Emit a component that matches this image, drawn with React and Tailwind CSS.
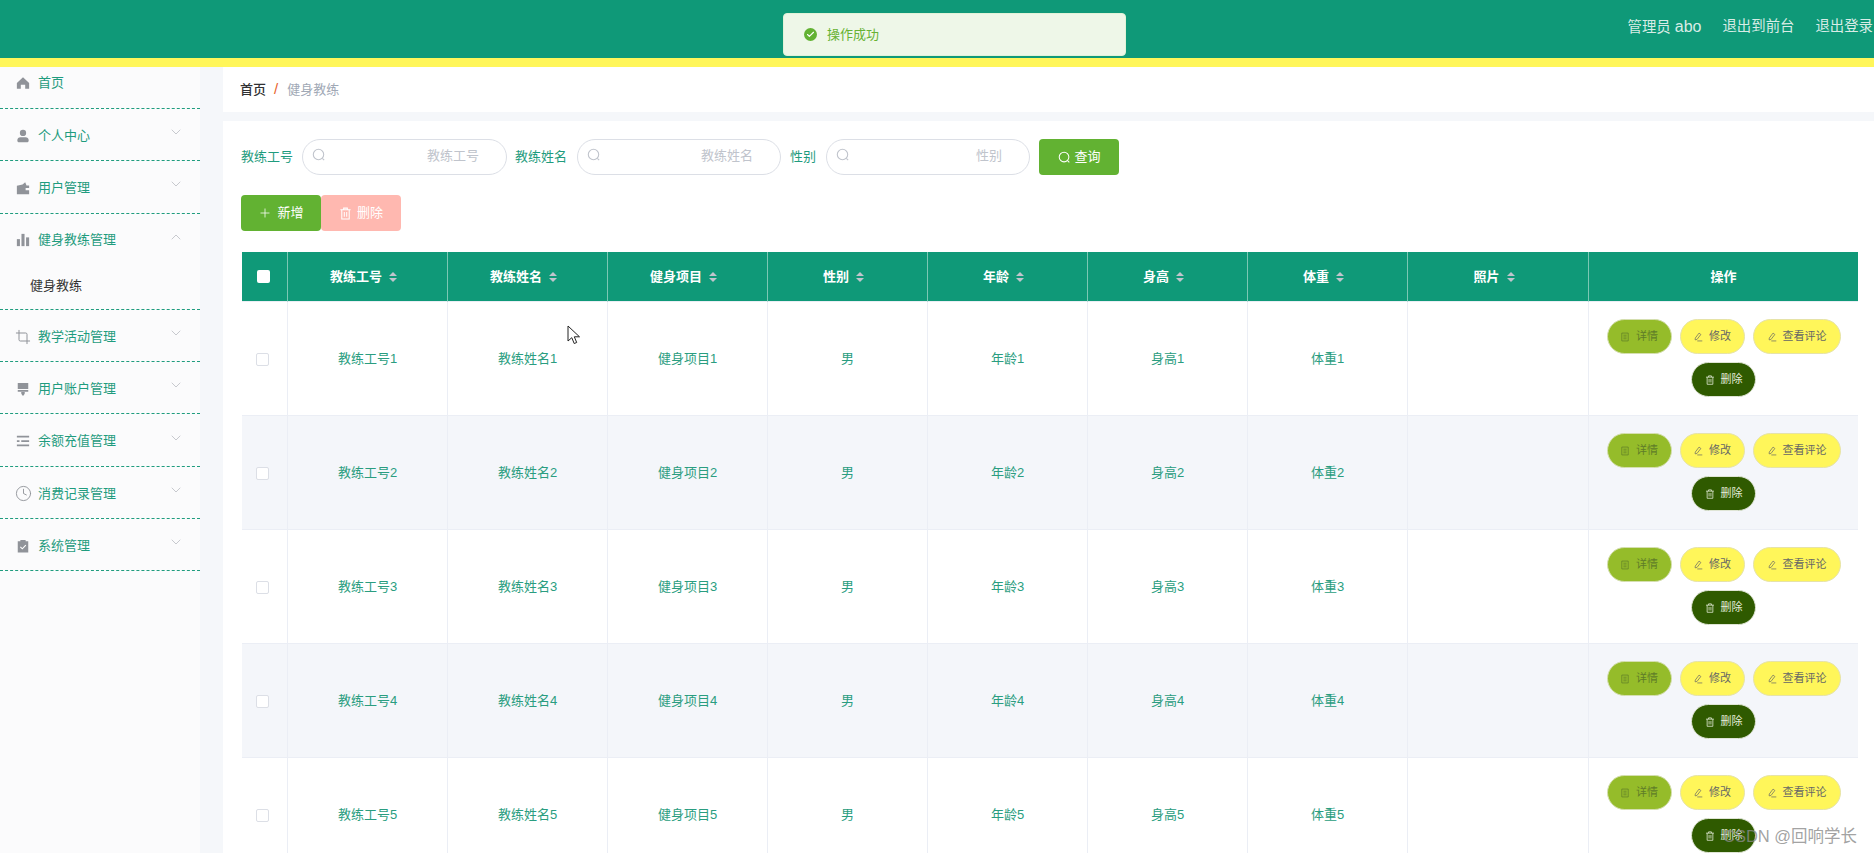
import React from 'react';
import { Check, ChevronDown, ChevronUp, Clock, Crop, Plus } from 'lucide-react';

// small solid icons used by the sidebar
const HomeIcon = () => (
  <svg viewBox="0 0 16 16" className="w-[14px] h-[14px] fill-[#909399]">
    <path d="M8 1.500 15 8v6.500h-4.500V10h-5v4.500H1V8z" />
  </svg>
);
const UserIcon = () => (
  <svg viewBox="0 0 16 16" className="w-[14px] h-[14px] fill-[#909399]">
    <circle cx="8" cy="4.500" r="3.600" />
    <path d="M1.500 13c0-2.400 1.600-3.600 3.500-3.600h6c1.900 0 3.500 1.200 3.500 3.600 0 1.300-.7 2-2 2H3.500c-1.300 0-2-.7-2-2z" />
  </svg>
);
const WalletIcon = () => (
  <svg viewBox="0 0 16 16" className="w-[14px] h-[14px] fill-[#909399]">
    <path d="M1 5.500 7.500 4l3-2.500L12 5h3v3h-4v2.500h4V15H1z" />
  </svg>
);
const BarsIcon = () => (
  <svg viewBox="0 0 16 16" className="w-[14px] h-[14px] fill-[#909399]">
    <rect x="1" y="7" width="3.500" height="8" />
    <rect x="6.250" y="1" width="3.500" height="14" />
    <rect x="11.500" y="5" width="3.500" height="10" />
  </svg>
);
const BrushIcon = () => (
  <svg viewBox="0 0 16 16" className="w-[14px] h-[14px] fill-[#909399]">
    <path d="M2 1h12v7H2zM2 9h12v2H2zM6 11.500h4V13l-1.200 2.500H7.200L6 13z" />
  </svg>
);
const LinesIcon = () => (
  <svg viewBox="0 0 16 16" className="w-[14px] h-[14px] fill-[#909399]">
    <path d="M1 2h14v2H1zM6 7h9v2H6zM1 7h3v2H1zM1 12h14v2H1z" />
  </svg>
);
const ClipboardIcon = () => (
  <svg viewBox="0 0 16 16" className="w-[16px] h-[16px]">
    <path className="fill-[#909399]" d="M2 2.500h3V1h6v1.500h3V15.500H2z" />
    <path d="M5 9l2.200 2.200L11.200 7" fill="none" stroke="#fff" strokeWidth="1.300" />
  </svg>
);

const SearchIcon = ({ className }) => (
  <svg viewBox="0 0 14 14" fill="none" stroke="currentColor" strokeWidth="1.100" className={className}>
    <circle cx="6.500" cy="6.500" r="5.200" />
    <path d="M10.300 10.300 12.200 12.200" />
  </svg>
);
const TrashIcon = ({ className }) => (
  <svg viewBox="0 0 14 14" fill="none" stroke="currentColor" strokeWidth="1.100" className={className}>
    <path d="M1.500 3h11M5 3V1.200h4V3M3 3v10h8V3M5.700 5.500v5M8.300 5.500v5" />
  </svg>
);
const PencilIcon = ({ className }) => (
  <svg viewBox="0 0 14 14" fill="none" stroke="currentColor" strokeWidth="1" className={className}>
    <path d="M8.500 1.500 11 3.500 5.500 10.500 3 11l.2-2.500zM6 12.500h7" />
  </svg>
);
const DocIcon = ({ className }) => (
  <svg viewBox="0 0 14 14" fill="none" stroke="currentColor" strokeWidth="1" className={className}>
    <path d="M2.500 1.500h9v11h-9zM4.800 4.500h4.400M4.800 7h4.400M4.800 9.500h4.400" />
  </svg>
);

const SortCaret = () => (
  <span className="flex flex-col gap-[2px] ml-[7px]">
    <span className="w-0 h-0 border-x-[4px] border-x-transparent border-b-[4px] border-b-[#c0c4cc]" />
    <span className="w-0 h-0 border-x-[4px] border-x-transparent border-t-[4px] border-t-[#c0c4cc]" />
  </span>
);

const menu = [
  { label: '个人中心', icon: <UserIcon /> },
  { label: '用户管理', icon: <WalletIcon /> },
  { label: '健身教练管理', icon: <BarsIcon />, open: true },
  { label: '教学活动管理', icon: <Crop className="w-[16px] h-[16px] shrink-0 text-[#909399]" strokeWidth={1.500} /> },
  { label: '用户账户管理', icon: <BrushIcon /> },
  { label: '余额充值管理', icon: <LinesIcon /> },
  { label: '消费记录管理', icon: <Clock className="w-[17px] h-[17px] shrink-0 text-[#909399]" strokeWidth={1.300} /> },
  { label: '系统管理', icon: <ClipboardIcon /> },
];

const Sidebar = () => (
  <aside className="w-[200px] shrink-0 bg-[#fbfbfc] text-[13px] text-[#1f9c7e]">
    <div className="h-[42px] pb-[10px] flex items-center pl-[16px] gap-[8px] border-b border-dashed border-[#1f9c7e]">
      <HomeIcon />
      <span>首页</span>
    </div>
    {menu.map((item) => (
      <div key={item.label} className="border-b border-dashed border-[#1f9c7e]">
        <div className="h-[51.3px] pt-[2px] flex items-center pl-[16px] pr-[16px] gap-[8px]">
          <span className="w-[14px] flex justify-center">{item.icon}</span>
          <span className="flex-1">{item.label}</span>
          {item.open ? (
            <ChevronUp className="w-[16px] h-[16px] mb-[7px] text-[#b4b7bd]" strokeWidth={1.100} />
          ) : (
            <ChevronDown className="w-[16px] h-[16px] mb-[7px] text-[#b4b7bd]" strokeWidth={1.100} />
          )}
        </div>
        {item.open && <div className="h-[44px] pb-[2px] flex items-center pl-[30px] text-[#333]">健身教练</div>}
      </div>
    ))}
  </aside>
);

const SearchField = ({ label, width }) => (
  <>
    <span className="text-[13px] text-[#1f9c7e]">{label}</span>
    <div className={`${width} h-[36px] rounded-full border border-[#dcdfe6] bg-white flex items-center justify-between pl-[9px] pr-[27px] pb-[2px] text-[13px] text-[#c0c4cc]`}>
      <SearchIcon className="w-[14px] h-[14px] mb-[3px]" />
      <span>{label}</span>
    </div>
  </>
);

const columns = ['教练工号', '教练姓名', '健身项目', '性别', '年龄', '身高', '体重'];

const RowActions = () => (
  <div className="flex flex-wrap justify-center gap-2 pb-px text-[11px]">
    <button className="w-[65px] h-[35px] rounded-full bg-[#95bc2a] border border-[#d5dfb0] text-[#5f7d28] flex items-center justify-center gap-[6px]">
      <DocIcon className="w-[10px] h-[10px]" />详情
    </button>
    <button className="w-[65px] h-[35px] rounded-full bg-[#fff65a] border border-[#e6e3a8] text-[#666] flex items-center justify-center gap-[6px]">
      <PencilIcon className="w-[10px] h-[10px]" />修改
    </button>
    <button className="w-[88px] h-[35px] rounded-full bg-[#fff65a] border border-[#e6e3a8] text-[#666] flex items-center justify-center gap-[6px]">
      <PencilIcon className="w-[10px] h-[10px]" />查看评论
    </button>
    <button className="w-[65px] h-[35px] rounded-full bg-[#2f5a00] border border-[#dfe5d5] text-[#e4ecd8] flex items-center justify-center gap-[6px]">
      <TrashIcon className="w-[10px] h-[10px]" />删除
    </button>
  </div>
);

const App = () => {
  const rows = [1, 2, 3, 4, 5];

  return (
    <div className="relative w-[1874px] h-[853px] overflow-hidden bg-[#f5f7fa] font-['Liberation_Sans','Noto_Sans_CJK_SC',sans-serif]">
      {/* Top bar */}
      <header className="h-[58px] bg-[#0f9978] flex items-center justify-end gap-[21px] pb-[4px] pr-px text-[14.4px] text-[#d8ece6]">
        <span>管理员 <span className="text-[16px]">abo</span></span>
        <span>退出到前台</span>
        <span>退出登录</span>
      </header>
      <div className="h-[9px] bg-[#fff65a]" />

      <div className="flex h-[786px]">
        <Sidebar />

        <main className="flex-1 pl-[23px] overflow-hidden">
          <div className="h-[45px] bg-white pl-[17px] flex items-center text-[13px]">
            <span className="text-[#303133] font-medium">首页</span>
            <span className="ml-[8px] mr-[9px] text-[15px] text-[#e8622c]">/</span>
            <span className="text-[#a0a8b5]">健身教练</span>
          </div>

          <section className="mt-[9px] bg-white h-[740px] pl-[18px] pt-[18px]">
            <div className="flex items-center h-[36px]">
              <SearchField label="教练工号" width="w-[205px] ml-[9px] mr-[8px]" />
              <SearchField label="教练姓名" width="w-[204px] ml-[10px] mr-[9px]" />
              <SearchField label="性别" width="w-[204px] ml-[10px] mr-[9px]" />
              <button className="w-[80px] h-[36px] rounded bg-[#62b232] text-white text-[13px] flex items-center justify-center gap-[4px]">
                <SearchIcon className="w-[13px] h-[13px]" />查询
              </button>
            </div>

            <div className="flex mt-[20px]">
              <button className="w-[80px] h-[36px] rounded bg-[#62b232] text-white text-[13px] flex items-center justify-center gap-[5px]">
                <Plus className="w-[14px] h-[14px]" strokeWidth={1.300} />新增
              </button>
              <button className="w-[80px] h-[36px] rounded bg-[#ffb8b0] text-white text-[13px] flex items-center justify-center gap-[5px]">
                <TrashIcon className="w-[13px] h-[13px]" />删除
              </button>
            </div>

            <table className="mt-[21px] ml-px w-[1616px] table-fixed border-separate border-spacing-0 text-[13px]">
              <thead>
                <tr className="h-[50px] bg-[#0f9978] text-white">
                  <th className="w-[46px] border-r border-b border-r-[#7cc7b4] border-b-[#ebeef5]">
                    <span className="block w-[13px] h-[13px] ml-[15px] mb-px rounded-[2px] bg-white" />
                  </th>
                  {columns.map((col) => (
                    <th key={col} className="w-[160px] border-r border-b border-r-[#7cc7b4] border-b-[#ebeef5] font-bold">
                      <span className="flex items-center justify-center pr-[8px]">{col}<SortCaret /></span>
                    </th>
                  ))}
                  <th className="w-[181px] border-r border-b border-r-[#7cc7b4] border-b-[#ebeef5] font-bold">
                    <span className="flex items-center justify-center pr-[8px]">照片<SortCaret /></span>
                  </th>
                  <th className="border-b border-b-[#ebeef5] font-bold">操作</th>
                </tr>
              </thead>
              <tbody>
                {rows.map((n) => (
                  <tr key={n} className={`h-[114px] text-[#2a9d80] ${n % 2 === 0 ? 'bg-[#f4f6fa]' : 'bg-white'}`}>
                    <td className="border-r border-b border-[#ebeef5]">
                      <span className="block w-[13px] h-[13px] ml-[14px] mt-[2px] rounded-[2px] border border-[#dcdfe6] bg-white" />
                    </td>
                    <td className="text-center border-r border-b border-[#ebeef5]">教练工号{n}</td>
                    <td className="text-center border-r border-b border-[#ebeef5]">教练姓名{n}</td>
                    <td className="text-center border-r border-b border-[#ebeef5]">健身项目{n}</td>
                    <td className="text-center border-r border-b border-[#ebeef5]">男</td>
                    <td className="text-center border-r border-b border-[#ebeef5]">年龄{n}</td>
                    <td className="text-center border-r border-b border-[#ebeef5]">身高{n}</td>
                    <td className="text-center border-r border-b border-[#ebeef5]">体重{n}</td>
                    <td className="border-r border-b border-[#ebeef5]" />
                    <td className="border-b border-[#ebeef5]">
                      <RowActions />
                    </td>
                  </tr>
                ))}
              </tbody>
            </table>
          </section>
        </main>
      </div>

      {/* Success toast */}
      <div className="absolute left-[783px] top-[13px] w-[343px] h-[43px] rounded bg-[#eef7e8] border border-[#e1f3d8] flex items-center pl-[20px] gap-[10px] text-[13px] text-[#67b233]">
        <span className="w-[13px] h-[13px] rounded-full bg-[#62b232] flex items-center justify-center">
          <Check className="w-[9px] h-[9px] text-white" strokeWidth={3} />
        </span>
        操作成功
      </div>

      {/* Mouse pointer caught in the capture */}
      <svg viewBox="0 0 14 20" className="absolute left-[567px] top-[325px] w-[14px] h-[20px]">
        <path d="M1 1v15l3.800-3.300 2.400 5.800 2.500-1-2.400-5.700H12.500z" fill="#fff" stroke="#222" strokeWidth="1" />
      </svg>

      {/* Watermark */}
      <div className="absolute left-[1723px] top-[824px] text-[16.5px] leading-[24px] text-[#8a8a8a]/80">CSDN @回响学长</div>
    </div>
  );
};

export default App;
